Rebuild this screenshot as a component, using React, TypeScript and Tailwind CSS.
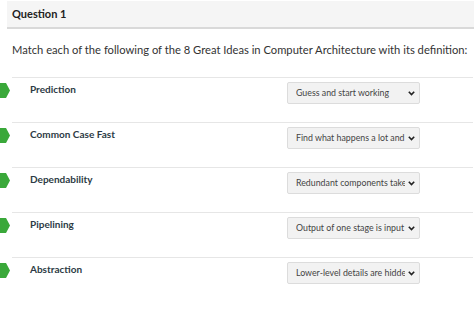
import React from "react";

const rows = [
  { label: "Prediction", answer: "Guess and start working" },
  { label: "Common Case Fast", answer: "Find what happens a lot and make it fast" },
  { label: "Dependability", answer: "Redundant components take over" },
  { label: "Pipelining", answer: "Output of one stage is input for the next" },
  { label: "Abstraction", answer: "Lower-level details are hidden" },
];

function Marker() {
  return (
    <svg width="10" height="15" viewBox="0 0 10 15">
      <polygon points="0,0 6,0 10,7.5 6,15 0,15" fill="#3aa83a" />
    </svg>
  );
}

function Chevron() {
  return (
    <svg width="7" height="5" viewBox="0 0 7 5">
      <path d="M0.8 0.8 L3.5 3.6 L6.2 0.8" fill="none" stroke="#222" strokeWidth="1.6" />
    </svg>
  );
}

export default function App() {
  return (
    <div
      className="w-[474px] h-[314px] bg-white overflow-hidden text-[#2d3b45]"
      style={{ fontFamily: "Lato, 'Open Sans', sans-serif" }}
    >
      <div className="ml-[7px] mt-[1px] h-[28px] bg-[#f5f5f5] border-b-2 border-[#d9d9d9] pl-[5px] flex items-center">
        <span className="text-[11px] font-bold text-[#222]">Question 1</span>
      </div>

      <p className="ml-[12px] mt-[14px] h-[34px] text-[11.2px] leading-[14px] whitespace-nowrap text-[#333]">
        Match each of the following of the 8 Great Ideas in Computer Architecture with its definition:
      </p>

      <div>
        {rows.map((r) => (
          <div key={r.label} className="flex h-[45px]">
            <div className="w-[12px] pt-[6px]">
              <Marker />
            </div>
            <div className="flex-1 mr-[1px] border-t border-[#e6e6e6] flex items-start">
              <div className="w-[275px] pl-[18px] pt-[5px] text-[10px] leading-[12px] font-bold text-[#2d3b45]">
                {r.label}
              </div>
              <div className="mt-[4px] w-[133px] h-[22px] bg-[#f2f2f2] border border-[#dcdcdc] rounded-[2px] flex items-center pl-[8px] pr-[4px]">
                <span className="flex-1 overflow-hidden whitespace-nowrap text-[8.8px] text-[#444]">
                  {r.answer}
                </span>
                <span className="ml-[3px] flex items-center">
                  <Chevron />
                </span>
              </div>
            </div>
          </div>
        ))}
      </div>
    </div>
  );
}
